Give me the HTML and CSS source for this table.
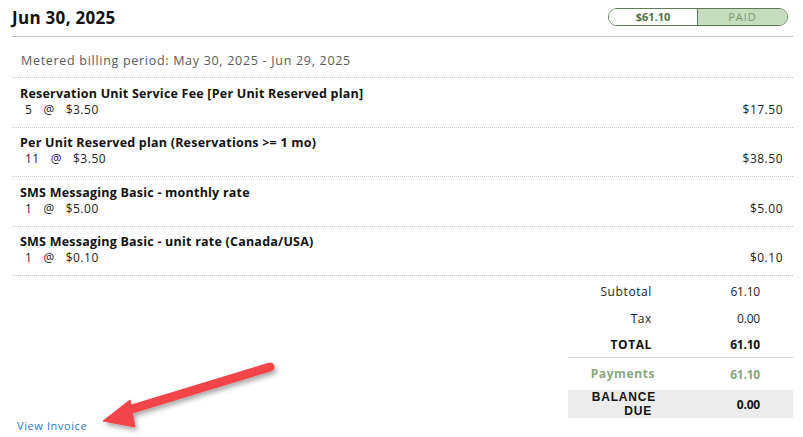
FILE: index.html
```html
<!DOCTYPE html>
<html>
<head>
<meta charset="utf-8">
<link rel="stylesheet" href="styles.css">
</head>
<body>
<div class="card">
  <div class="header">
    <h1 class="date">Jun 30, 2025</h1>
    <div class="badge"><span class="badge-amt">$61.10</span><span class="badge-status">PAID</span></div>
  </div>
  <div class="period">Metered billing period: May 30, 2025 - Jun 29, 2025</div>
  <div class="item">
    <div class="item-info">
      <div class="item-name">Reservation Unit Service Fee [Per Unit Reserved plan]</div>
      <div class="item-qty"><span>5</span><span>@</span><span>$3.50</span></div>
    </div>
    <div class="item-amt">$17.50</div>
  </div>
  <div class="item">
    <div class="item-info">
      <div class="item-name">Per Unit Reserved plan (Reservations &gt;= 1 mo)</div>
      <div class="item-qty"><span>11</span><span>@</span><span>$3.50</span></div>
    </div>
    <div class="item-amt">$38.50</div>
  </div>
  <div class="item">
    <div class="item-info">
      <div class="item-name">SMS Messaging Basic - monthly rate</div>
      <div class="item-qty"><span>1</span><span>@</span><span>$5.00</span></div>
    </div>
    <div class="item-amt">$5.00</div>
  </div>
  <div class="item">
    <div class="item-info">
      <div class="item-name">SMS Messaging Basic - unit rate (Canada/USA)</div>
      <div class="item-qty"><span>1</span><span>@</span><span>$0.10</span></div>
    </div>
    <div class="item-amt">$0.10</div>
  </div>
  <div class="summary">
    <div class="srow"><div class="slabel">Subtotal</div><div class="sval">61.10</div></div>
    <div class="srow"><div class="slabel">Tax</div><div class="sval">0.00</div></div>
    <div class="srow total"><div class="slabel">TOTAL</div><div class="sval">61.10</div></div>
    <div class="srow pay"><div class="slabel">Payments</div><div class="sval">61.10</div></div>
    <div class="srow due"><div class="slabel"><span class="ln">BALANCE</span><span class="ln">DUE</span></div><div class="sval">0.00</div></div>
  </div>
  <a class="view" href="#">View Invoice</a>
</div>
<svg class="arrow" width="803" height="437" viewBox="0 0 803 437">
  <defs>
    <filter id="sh" x="-20%" y="-20%" width="140%" height="140%">
      <feDropShadow dx="2" dy="3" stdDeviation="2.5" flood-color="#000" flood-opacity="0.35"/>
    </filter>
  </defs>
  <g filter="url(#sh)" fill="#f24449" stroke="#f24449">
    <line x1="270" y1="367" x2="122" y2="412" stroke-width="9" stroke-linecap="round"/>
    <polygon points="103,421 130,400 135,427" stroke-width="1" stroke-linejoin="round"/>
  </g>
</svg>
</body>
</html>
```
FILE: styles.css
```css
* { box-sizing: border-box; }
html, body { margin: 0; padding: 0; background: #fff; }
body {
  font-family: "Open Sans", "DejaVu Sans", sans-serif;
  color: #111;
  width: 803px;
  height: 437px;
  overflow: hidden;
  position: relative;
}
.card {
  margin-left: 12px;
  width: 781px;
}
.header {
  height: 37px;
  display: flex;
  justify-content: space-between;
  align-items: flex-start;
  border-bottom: 1px solid #bdbdbd;
}
.date {
  margin: 6px 0 0 0;
  font-size: 17px;
  font-weight: 700;
  letter-spacing: 0.3px;
  line-height: 24px;
  color: #111;
}
.badge {
  margin-top: 8px;
  margin-right: 5px;
  display: flex;
  height: 18px;
  border: 1px solid #5b7f52;
  border-radius: 9px;
  overflow: hidden;
  font-size: 11px;
  line-height: 16px;
}
.badge-amt {
  width: 89px;
  text-align: center;
  font-weight: 700;
  color: #52704a;
  background: #fff;
  border-right: 1px solid #5b7f52;
}
.badge-status {
  width: 89px;
  text-align: center;
  background: #c6dcbe;
  color: #7c9a72;
  letter-spacing: 1px;
}
.period {
  height: 41px;
  padding: 15px 0 0 9px;
  font-size: 12.5px;
  line-height: 17px;
  color: #555a60;
  letter-spacing: 0.7px;
  border-bottom: 1px dotted #c8c8c8;
}
.item {
  height: 49.5px;
  display: flex;
  justify-content: space-between;
  align-items: flex-end;
  padding: 8px 10px 9px 8px;
  border-bottom: 1px dotted #c8c8c8;
}
.item-name {
  font-size: 12.5px;
  font-weight: 700;
  letter-spacing: 0.22px;
  line-height: 16px;
  color: #111;
}
.item-qty {
  font-size: 12px;
  line-height: 16px;
  padding-left: 5px;
  letter-spacing: 0.5px;
  color: #222;
  display: flex;
  gap: 11px;
}
.item-amt {
  font-size: 12px;
  line-height: 16px;
  letter-spacing: 0.5px;
  color: #222;
}
.summary {
  width: 225px;
  margin-left: auto;
  margin-top: 2px;
}
.srow {
  display: flex;
  align-items: center;
  height: 27px;
  font-size: 12px;
  color: #222;
}
.slabel {
  width: 84px;
  text-align: right;
  letter-spacing: 0.6px;
  line-height: 14px;
}
.sval {
  width: 108px;
  text-align: right;
  letter-spacing: -0.2px;
}
.total {
  font-weight: 700;
  color: #111;
  border-bottom: 1px solid #d4d4d4;
  height: 26px;
}
.pay {
  font-weight: 700;
  color: #8aa67e;
  height: 32px;
}
.pay .slabel { width: 87px; }
.pay .sval { width: 105px; }
.due {
  font-weight: 700;
  color: #111;
  background: #ececec;
  height: 28px;
}
.due .slabel {
  display: flex;
  flex-direction: column;
  align-items: flex-end;
  font-family: "Liberation Sans", "Open Sans", sans-serif;
  font-size: 12px;
  line-height: 14px;
  letter-spacing: 0.8px;
}
.due .ln:first-child { margin-right: -4px; }
.view {
  display: block;
  width: max-content;
  font-size: 11px;
  color: #2a78c0;
  text-decoration: none;
  letter-spacing: 0.6px;
  margin: 1px 0 0 5px;
  line-height: 14px;
}
.arrow {
  position: absolute;
  left: 0;
  top: 0;
  pointer-events: none;
}
```
